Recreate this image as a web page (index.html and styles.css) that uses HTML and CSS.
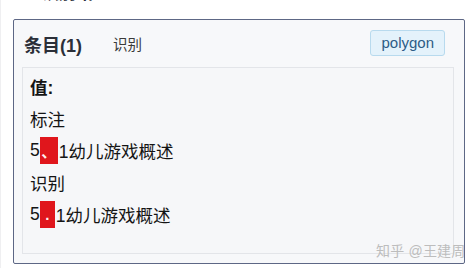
FILE: index.html
```html
<!DOCTYPE html>
<html>
<head>
<meta charset="utf-8">
<link rel="stylesheet" href="styles.css">
</head>
<body>
<div class="page">
  <div class="heading">识别结</div>
  <div class="card">
    <div class="card-head">
      <span class="title">条目(1)</span>
      <span class="sub">识别</span>
      <span class="badge">polygon</span>
    </div>
    <div class="panel">
      <div class="line bold">值:</div>
      <div class="line">标注</div>
      <div class="line">5<span class="mark mark-wide">、</span>1幼儿游戏概述</div>
      <div class="line">识别</div>
      <div class="line">5<span class="mark mark-narrow">.</span>1幼儿游戏概述</div>
    </div>
  </div>
  <div class="watermark">知乎 @王建周</div>
</div>
</body>
</html>
```
FILE: styles.css
```css
html, body {
  margin: 0;
  padding: 0;
  background: #ffffff;
}
body {
  width: 474px;
  height: 268px;
  overflow: hidden;
  font-family: "Liberation Sans", "Noto Sans CJK SC", sans-serif;
  color: #222;
}
.page {
  position: relative;
  width: 474px;
  height: 268px;
  border-left: 1px solid #efeff1;
  box-sizing: border-box;
  padding-left: 12px;
  padding-top: 1px;
}
.heading {
  height: 18px;
  margin-top: -16px;
  margin-bottom: 16px;
  margin-left: 29px;
  font-size: 17px;
  font-weight: bold;
  line-height: 18px;
  color: #2a2f3a;
}
.card {
  width: 452px;
  height: 245px;
  box-sizing: border-box;
  border: 1.5px solid #5d6785;
  border-radius: 2px;
  background: #f7f8fa;
  padding: 0 10px 9px 8px;
  display: flex;
  flex-direction: column;
}
.card-head {
  height: 47px;
  display: flex;
  align-items: center;
  padding-left: 2px;
  flex-shrink: 0;
}
.title {
  font-size: 18px;
  font-weight: bold;
  color: #2b2f38;
}
.sub {
  margin-left: 31px;
  font-size: 14.5px;
  color: #3a3a3a;
}
.badge {
  margin-left: auto;
  margin-right: 9px;
  margin-top: -2px;
  height: 24px;
  line-height: 24px;
  padding: 0 10px;
  font-size: 15px;
  color: #2d5c86;
  background: #e4f2fb;
  border: 1px solid #b8daee;
  border-radius: 3px;
}
.panel {
  flex: 1;
  border: 1px solid #e3e5e9;
  background: #f6f7f9;
  padding: 2px 0 0 7px;
}
.line {
  height: 32px;
  display: flex;
  align-items: center;
  font-size: 17.5px;
  color: #141414;
}
.bold {
  font-weight: bold;
}
.mark {
  display: inline-flex;
  align-items: center;
  justify-content: center;
  height: 27px;
  background: #e0161c;
  color: #fff2f2;
  font-size: 15px;
  font-weight: bold;
}
.mark-wide {
  width: 18px;
  margin-right: 1px;
}
.mark-narrow {
  width: 15px;
  margin-right: 1px;
}
.watermark {
  position: absolute;
  left: 375px;
  top: 240px;
  font-size: 14px;
  color: #bdbdbd;
  letter-spacing: 0.2px;
  white-space: nowrap;
}
```
